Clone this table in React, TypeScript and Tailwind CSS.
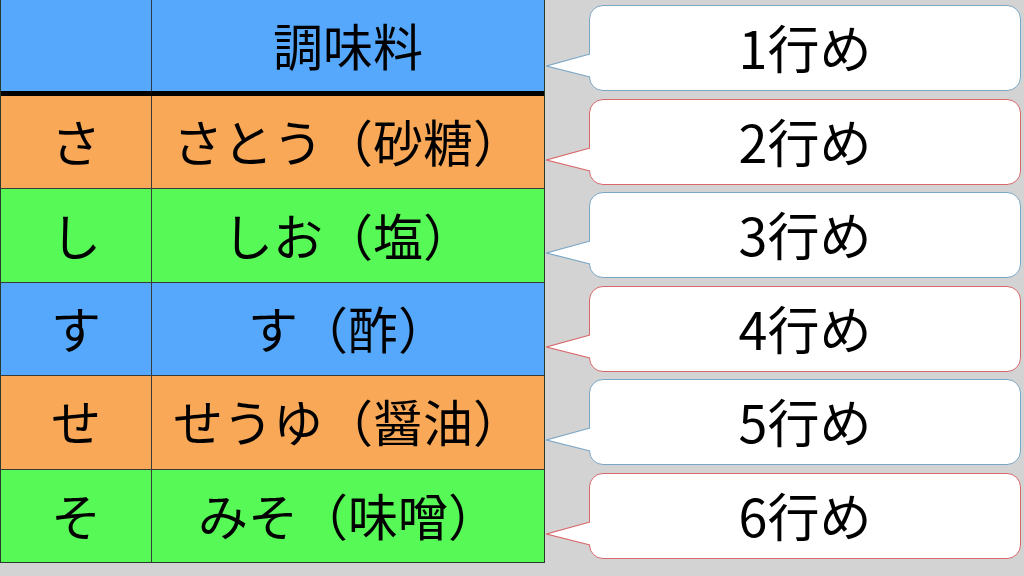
const rows = [
  { kana: "さ", name: "さとう（砂糖）", bg: "bg-[#f9a857]" },
  { kana: "し", name: "しお（塩）", bg: "bg-[#57f957]" },
  { kana: "す", name: "す（酢）", bg: "bg-[#55a8fc]" },
  { kana: "せ", name: "せうゆ（醤油）", bg: "bg-[#f9a857]" },
  { kana: "そ", name: "みそ（味噌）", bg: "bg-[#57f957]" },
];

const notes = ["1行め", "2行め", "3行め", "4行め", "5行め", "6行め"];

function Callout({ label, red }: { label: string; red: boolean }) {
  const stroke = red ? "#d9676a" : "#7aa6c6";
  return (
    <div className="relative h-[86px] w-[432px]">
      <div
        className={`h-full w-full rounded-[14px] border bg-white flex items-center justify-center pb-[2px] text-[52px] leading-none text-black ${
          red ? "border-[#d9676a]" : "border-[#7aa6c6]"
        }`}
      >
        {label}
      </div>
      <svg className="absolute left-[-43px] top-[48px]" width="45" height="26" viewBox="0 0 45 26">
        <polygon points="44,1 0.5,13 44,24" fill="white" />
        <polyline points="44,1 0.5,13 44,24" fill="none" stroke={stroke} strokeWidth="1.2" />
      </svg>
    </div>
  );
}

export default function App() {
  return (
    <div
      className="w-[1024px] h-[576px] bg-[#d3d3d3] flex overflow-hidden"
      style={{ fontFamily: '"Noto Sans CJK JP", "Noto Sans", sans-serif' }}
    >
      <div className="w-[545px] h-[563px] flex flex-col border-r border-b border-l border-[#2a3a2a]">
        <div className="grid grid-cols-[151px_1fr] h-[96px] bg-[#55a8fc] border-b-[5px] border-black">
          <div className="border-r border-[#2a3a4a]" />
          <div className="flex items-center justify-center pb-[4px] text-[50px] leading-none text-black">調味料</div>
        </div>
        {rows.map((r, i) => (
          <div
            key={r.kana}
            className={`grid grid-cols-[151px_1fr] flex-1 ${r.bg} ${i < rows.length - 1 ? "border-b border-[#3a3a3a]" : ""}`}
          >
            <div className="border-r border-[#3a3a3a] flex items-center justify-center pb-[4px] text-[50px] leading-none text-black">
              {r.kana}
            </div>
            <div className="flex items-center justify-center pb-[4px] text-[50px] leading-none text-black">{r.name}</div>
          </div>
        ))}
      </div>
      <div className="ml-[44px] pt-[5px] flex flex-col gap-[7.5px]">
        {notes.map((n, i) => (
          <Callout key={n} label={n} red={i % 2 === 1} />
        ))}
      </div>
    </div>
  );
}
